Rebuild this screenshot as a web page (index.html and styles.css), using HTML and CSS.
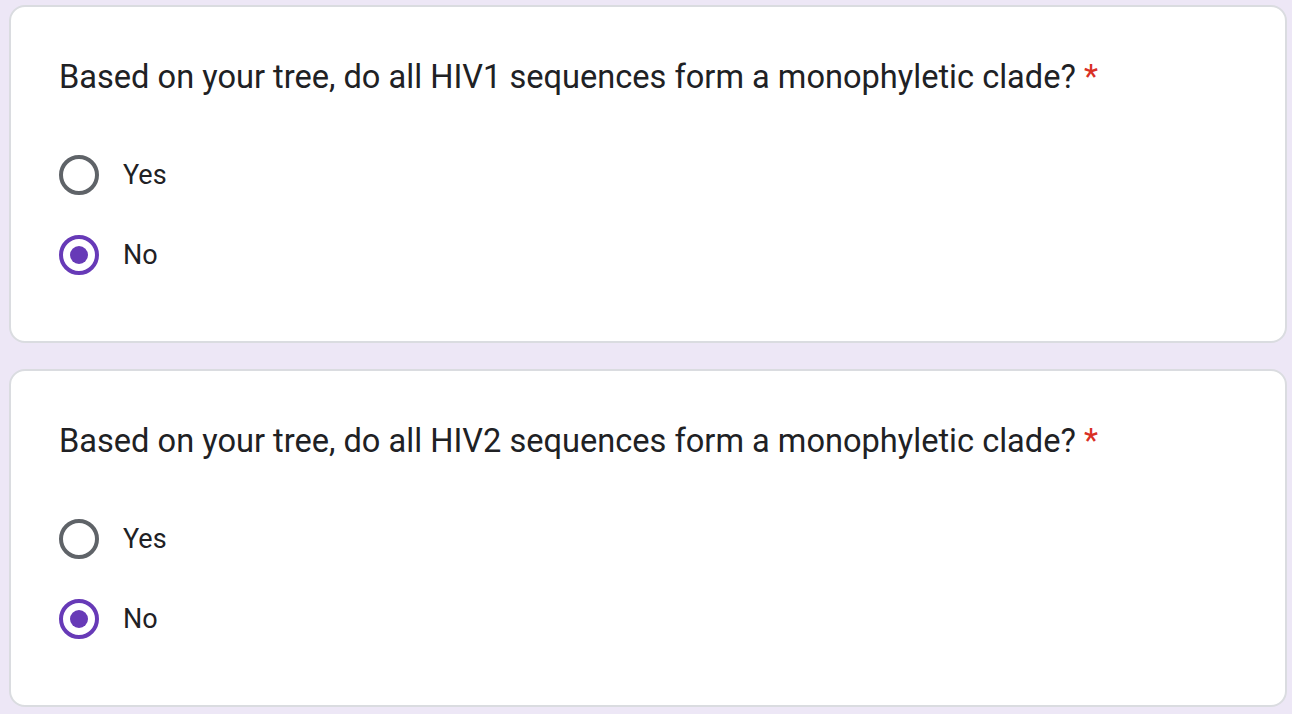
FILE: index.html
```html
<!DOCTYPE html>
<html lang="en">
<head>
    <meta charset="UTF-8">
    <meta name="viewport" content="width=device-width, initial-scale=1.0">
    <title>Phylogeny Quiz</title>
    <link rel="stylesheet" href="styles.css">
</head>
<body>
    <div class="form">
        <div class="card">
            <div class="question">Based on your tree, do all HIV1 sequences form a monophyletic clade? <span class="required">*</span></div>
            <div class="options">
                <label class="option">
                    <span class="radio"></span>
                    <span class="option-text">Yes</span>
                </label>
                <label class="option">
                    <span class="radio checked"></span>
                    <span class="option-text">No</span>
                </label>
            </div>
        </div>

        <div class="card">
            <div class="question">Based on your tree, do all HIV2 sequences form a monophyletic clade? <span class="required">*</span></div>
            <div class="options">
                <label class="option">
                    <span class="radio"></span>
                    <span class="option-text">Yes</span>
                </label>
                <label class="option">
                    <span class="radio checked"></span>
                    <span class="option-text">No</span>
                </label>
            </div>
        </div>
    </div>
</body>
</html>
```

FILE: styles.css
```css
* {
    margin: 0;
    padding: 0;
    box-sizing: border-box;
}

body {
    height: 100vh;
    background: #ede7f6;
    font-family: 'Roboto', 'Liberation Sans', sans-serif;
    color: #202124;
    overflow: hidden;
}

.form {
    display: flex;
    flex-direction: column;
    gap: 26px;
    padding: 5px 5px 0 9px;
}

.card {
    background: #fff;
    border: 2px solid #dadce0;
    border-radius: 16px;
    padding: 50px 48px 46px 48px;
}

.question {
    font-size: 32.6px;
    line-height: 40px;
}

.required {
    color: #d93025;
}

.options {
    margin-top: 38px;
    display: flex;
    flex-direction: column;
}

.option {
    height: 80px;
    display: flex;
    align-items: center;
    gap: 24px;
}

.radio {
    width: 40px;
    height: 40px;
    border-radius: 50%;
    border: 4px solid #5f6368;
    display: flex;
    justify-content: center;
    align-items: center;
}

.radio.checked {
    border-color: #673ab7;
}

.radio.checked::after {
    content: '';
    width: 18px;
    height: 18px;
    border-radius: 50%;
    background: #673ab7;
}

.option-text {
    font-size: 27px;
}
```
